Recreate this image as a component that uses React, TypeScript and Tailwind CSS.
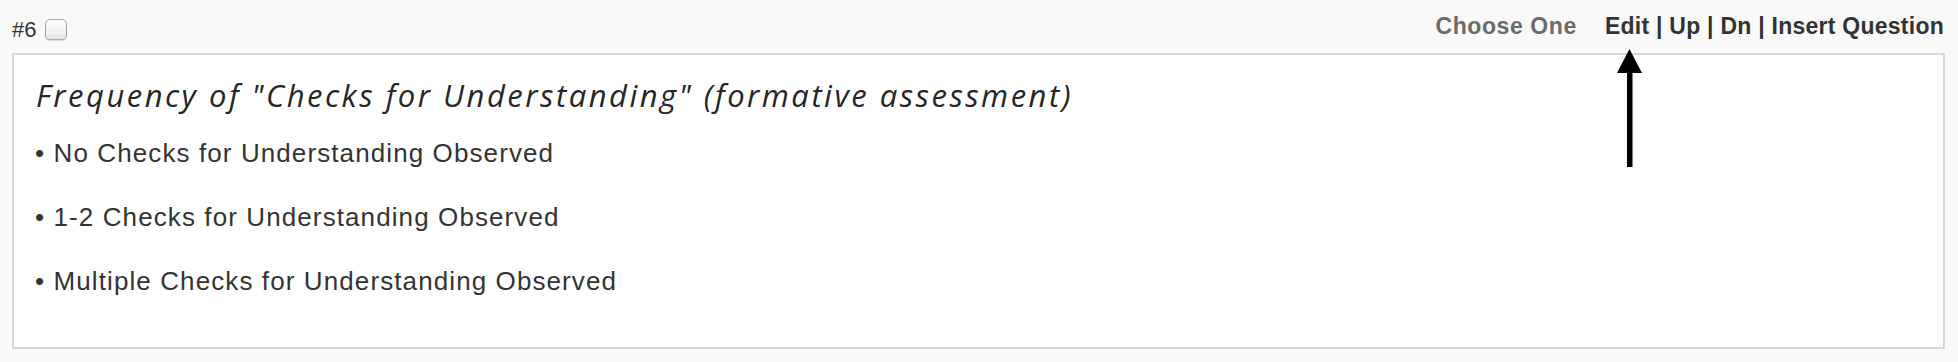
const options = [
  "No Checks for Understanding Observed",
  "1-2 Checks for Understanding Observed",
  "Multiple Checks for Understanding Observed",
];

export default function App() {
  return (
    <div className="relative h-[362px] w-full bg-[#f9f9f9] font-['Liberation_Sans',Arial,sans-serif] text-[#333]">
      {/* question header */}
      <div className="flex h-[53px] items-center justify-between pl-3 pr-[14px]">
        <div className="flex items-center gap-[9px] pt-[6px] text-[22px]">
          <span>#6</span>
          <span className="block h-[21px] w-[22px] rounded-[5px] border border-[#a9a9a9] bg-gradient-to-b from-white to-[#e6e6e6] shadow-[0_1px_1px_rgba(0,0,0,0.15)]" />
        </div>
        <div className="flex items-center gap-[28px] text-[23px] font-bold">
          <span className="tracking-[0.6px] text-[#6b6b6b]">Choose One</span>
          <span className="tracking-[0.25px] text-[#333]">Edit | Up | Dn | Insert Question</span>
        </div>
      </div>

      {/* question body */}
      <div className="ml-3 mr-[13px] h-[296px] border-2 border-[#d6d6d6] bg-white">
        <h2 className="pl-[22px] pt-[22px] font-['Open_Sans',sans-serif] text-[31px] font-medium italic leading-[36px] tracking-[2.5px] text-[#262626]">
          Frequency of "Checks for Understanding" (formative assessment)
        </h2>
        <ul className="mt-[24px] space-y-[32px] pl-[21px] text-[26px] leading-[32px] tracking-[1.1px]">
          {options.map((o) => (
            <li key={o}>• {o}</li>
          ))}
        </ul>
      </div>

      {/* annotation arrow */}
      <svg className="absolute left-[1617px] top-[49px]" width="25" height="118" viewBox="0 0 25 118">
        <polygon points="12.5,0 25,24 0,24" fill="#000" />
        <rect x="10" y="23" width="5.5" height="95" fill="#000" />
      </svg>
    </div>
  );
}
